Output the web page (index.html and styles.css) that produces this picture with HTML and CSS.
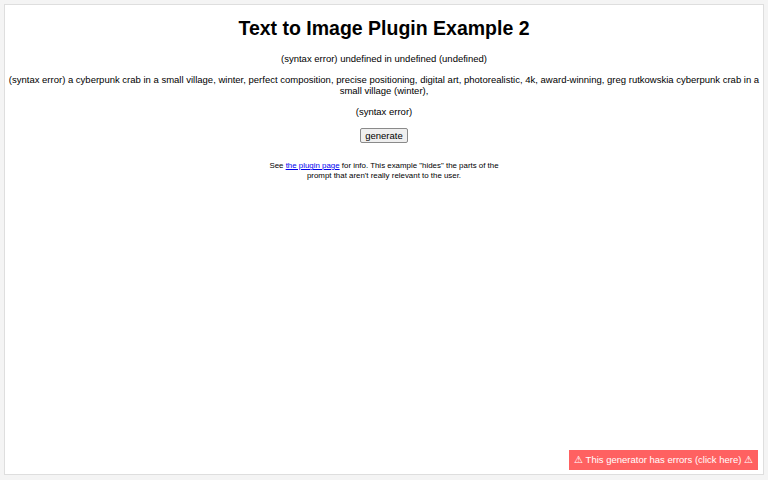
FILE: index.html
```html
<!DOCTYPE html>
<html>
<head>
<meta charset="utf-8">
<link rel="stylesheet" href="styles.css">
</head>
<body>
<div class="frame">
  <h1 class="title">Text to Image Plugin Example 2</h1>
  <p class="line first">(syntax error) undefined in undefined (undefined)</p>
  <p class="line">(syntax error) a cyberpunk crab in a small village, winter, perfect composition, precise positioning, digital art, photorealistic, 4k, award-winning, greg rutkowskia cyberpunk crab in a small village (winter),</p>
  <p class="line">(syntax error)</p>
  <div class="btnrow"><button class="gen">generate</button></div>
  <p class="note">See <a href="#">the plugin page</a> for info. This example "hides" the parts of the prompt that aren't really relevant to the user.</p>
  <div class="errbadge">⚠ This generator has errors (click here) ⚠</div>
</div>
</body>
</html>
```
FILE: styles.css
```css
html, body { margin: 0; padding: 0; }
body {
  background: #f4f4f4;
  padding: 4px;
  font-family: "Liberation Sans", Arial, sans-serif;
  color: #000;
}
.frame {
  position: relative;
  box-sizing: border-box;
  height: 471px;
  background: #fff;
  border: 1px solid #dedede;
  text-align: center;
  padding: 0;
}
.title {
  margin: 0;
  padding-top: 11px;
  font-size: 19.5px;
  line-height: 24px;
  font-weight: bold;
}
.line {
  font-size: 9.5px;
  line-height: 11px;
  margin: 10px 0 0 0;
}
.line.first { margin-top: 13px; }
.btnrow {
  margin-top: 11px;
  display: flex;
  justify-content: center;
}
.gen {
  font-family: "Liberation Sans", Arial, sans-serif;
  font-size: 9.5px;
  padding: 0 4px;
  height: 15px;
  line-height: 11px;
  border: 1px solid #8a8a8a;
  border-radius: 2px;
  background: #efefef;
  color: #000;
}
.note {
  width: 240px;
  margin: 18px auto 0 auto;
  font-size: 7.9px;
  line-height: 9.5px;
}
.note a { color: #0000ee; }
.errbadge {
  position: absolute;
  right: 5px;
  bottom: 4px;
  background: #ff6161;
  color: #fff;
  font-size: 9.5px;
  line-height: 20px;
  padding: 0 5px;
}
```
